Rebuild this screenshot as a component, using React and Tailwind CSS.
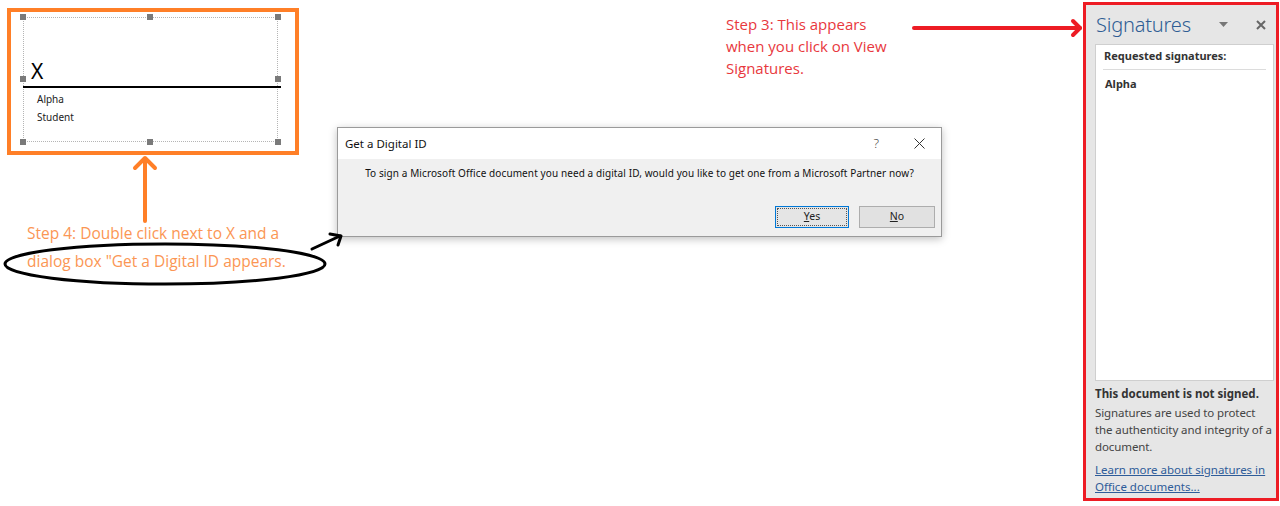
import React from 'react';

const Handle = ({ x, y }) => (
  <div
    className="absolute w-[6px] h-[6px] bg-[#7a7a7a]"
    style={{ left: x - 3, top: y - 3 }}
  />
);

const handles = [
  [23, 17], [150, 17], [278, 17],
  [23, 79], [278, 79],
  [23, 142], [150, 142], [278, 142],
];

const Annotations = () => (
  <svg className="absolute inset-0 pointer-events-none" width="1083" height="506">
    {/* orange arrow up to the signature box */}
    <g stroke="#ff7f27" strokeWidth="4" fill="none" strokeLinecap="round" strokeLinejoin="round">
      <line x1="145" y1="221" x2="145" y2="159" />
      <polyline points="135,168 145,158 155,168" />
    </g>
    {/* red arrow to the panel */}
    <g stroke="#ed1c24" strokeWidth="4" fill="none" strokeLinecap="round" strokeLinejoin="round">
      <line x1="914" y1="28" x2="1080" y2="28" />
      <polyline points="1073,21 1080,28 1073,35" />
    </g>
    {/* black ellipse and arrow to dialog */}
    <g stroke="#000" strokeWidth="3" fill="none" strokeLinecap="round" strokeLinejoin="round">
      <ellipse cx="165" cy="264" rx="160" ry="20" />
      <line x1="312" y1="249" x2="340" y2="236" />
      <polyline points="330,234 341,236 338,245" />
    </g>
  </svg>
);

const SignatureLine = () => (
  <div className="absolute left-[7px] top-[8px] w-[292px] h-[147px] border-4 border-[#ff7f27] bg-white" />
);

const Dialog = () => (
  <div
    className="absolute left-[337px] top-[127px] w-[605px] h-[110px] border border-[#9a9a9a] bg-[#f0f0f0] shadow-[0_2px_8px_rgba(0,0,0,0.25)] flex flex-col"
    style={{ fontFamily: '"Noto Sans", "Open Sans", sans-serif' }}
  >
    <div className="h-[31px] bg-white flex items-center pl-[7px] pr-[16px]">
      <span className="text-[11.5px] text-[#111]">Get a Digital ID</span>
      <span className="ml-auto text-[13px] text-[#444] font-light">?</span>
      <svg className="ml-[35px]" width="11" height="11" viewBox="0 0 11 11">
        <path d="M0.5 0.5L10.5 10.5M10.5 0.5L0.5 10.5" stroke="#333" strokeWidth="1" />
      </svg>
    </div>
    <div className="text-center text-[10px] text-[#111] mt-[7px] tracking-[0.1px]">
      To sign a Microsoft Office document you need a digital ID, would you like to get one from a Microsoft Partner now?
    </div>
    <div className="mt-auto mb-[8px] mr-[6px] flex justify-end gap-[10px]">
      <div className="w-[74px] h-[22px] border border-[#0078d7] bg-[#e5e5e5] p-[1px]">
        <div className="w-full h-full border border-dotted border-[#555] flex items-center justify-center text-[10.5px] text-[#222]">
          <span><span className="underline">Y</span>es</span>
        </div>
      </div>
      <div className="w-[76px] h-[22px] border border-[#adadad] bg-[#e1e1e1] flex items-center justify-center text-[10.5px] text-[#222]">
        <span><span className="underline">N</span>o</span>
      </div>
    </div>
  </div>
);

const SignaturesPanel = () => (
  <div
    className="w-[196px] mt-[2px] mb-[5px] mr-[1px] border-[3px] border-[#ed1c24] bg-[#e6e6e6] flex flex-col"
    style={{ fontFamily: '"Noto Sans", "Open Sans", sans-serif' }}
  >
    <div className="h-[39px] flex items-center pl-[10px] pr-[10px]">
      <span className="text-[20px] font-light text-[#2f5d94] tracking-[-0.2px]">Signatures</span>
      <svg className="ml-auto mr-[28px]" width="9" height="5" viewBox="0 0 9 5">
        <path d="M0 0H9L4.5 5Z" fill="#777" />
      </svg>
      <svg width="10" height="10" viewBox="0 0 10 10">
        <path d="M1 1L9 9M9 1L1 9" stroke="#666" strokeWidth="2" />
      </svg>
    </div>
    <div className="ml-[9px] mr-[2px] h-[337px] bg-white border border-[#cfcfcf] pt-[3px] px-[7px]">
      <div className="text-[11px] font-bold text-[#333] pb-[4px] border-b border-[#dcdcdc] pl-[1px]">
        Requested signatures:
      </div>
      <div className="text-[11px] font-bold text-[#333] mt-[6px] pl-[2px]">Alpha</div>
    </div>
    <div className="pl-[9px] pr-0 pt-[4px] text-[#333]">
      <div className="text-[11.5px] font-bold leading-[17px]">This document is not signed.</div>
      <p className="text-[11.5px] leading-[17px] mt-[2px] text-[#444] whitespace-nowrap tracking-[-0.1px]">
        Signatures are used to protect<br />the authenticity and integrity of a<br />document.
      </p>
      <p className="text-[11.5px] leading-[17px] mt-[6px] text-[#2e5c99] underline">
        Learn more about signatures in Office documents...
      </p>
    </div>
  </div>
);

export default function App() {
  return (
    <div className="w-[1280px] h-[506px] bg-white flex overflow-hidden">
      <div className="relative flex-1">
        <SignatureLine />
        <div className="absolute left-[23px] top-[17px] w-[255px] h-[125px] border border-dotted border-[#b5b5b5]" />
        <div className="absolute left-[23px] top-[86px] w-[258px] h-[2px] bg-black" />
        <span
          className="absolute left-[31px] top-[61px] text-[21px] leading-none text-black"
          style={{ fontFamily: '"Noto Sans", sans-serif' }}
        >
          X
        </span>
        <div
          className="absolute left-[37px] top-[90px] text-[10px] leading-[18px] text-[#222]"
          style={{ fontFamily: '"Noto Sans", sans-serif' }}
        >
          <div>Alpha</div>
          <div>Student</div>
        </div>
        {handles.map(([x, y]) => (
          <Handle key={`${x}-${y}`} x={x} y={y} />
        ))}

        <div
          className="absolute left-[726px] top-[13px] w-[200px] text-[15px] leading-[22px] text-[#e8383d]"
          style={{ fontFamily: '"Open Sans", sans-serif' }}
        >
          Step 3: This appears<br />when you click on View<br />Signatures.
        </div>

        <div
          className="absolute left-[27px] top-[219px] text-[15.5px] leading-[28px] text-[#fb9654]"
          style={{ fontFamily: '"Open Sans", sans-serif' }}
        >
          Step 4: Double click next to X and a<br />dialog box "Get a Digital ID appears.
        </div>

        <Dialog />
        <Annotations />
      </div>
      <SignaturesPanel />
    </div>
  );
}
